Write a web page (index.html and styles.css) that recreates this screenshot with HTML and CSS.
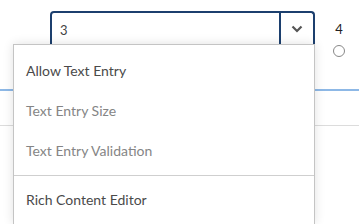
FILE: index.html
```html
<!DOCTYPE html>
<html>
<head>
<meta charset="utf-8">
<link rel="stylesheet" href="styles.css">
</head>
<body>
<div class="page">
  <div class="top-row">
    <div class="select">
      <div class="select-value">3</div>
      <div class="select-btn">
        <svg width="12" height="8" viewBox="0 0 12 8"><path d="M1.5 1.5 L6 6 L10.5 1.5" fill="none" stroke="#555" stroke-width="2.2"/></svg>
      </div>
    </div>
    <div class="choice">
      <div class="choice-label">4</div>
      <div class="radio"></div>
    </div>
  </div>
  <div class="rule-blue"></div>
  <div class="rule-gray"></div>
</div>
<div class="menu">
  <div class="menu-item">Allow Text Entry</div>
  <div class="menu-item disabled">Text Entry Size</div>
  <div class="menu-item disabled">Text Entry Validation</div>
  <div class="menu-sep"></div>
  <div class="menu-item">Rich Content Editor</div>
</div>
</body>
</html>
```
FILE: styles.css
```css
html, body {
  margin: 0;
  padding: 0;
  background: #fff;
  font-family: Lato, "Open Sans", sans-serif;
  overflow: hidden;
  width: 359px;
  height: 224px;
}
.page {
  padding-top: 11px;
}
.top-row {
  display: flex;
  align-items: flex-start;
}
.select {
  margin-left: 50px;
  width: 265px;
  height: 33px;
  box-sizing: border-box;
  border: 2px solid #1c3f6e;
  border-bottom: none;
  border-radius: 4px 4px 0 0;
  display: flex;
}
.select-value {
  flex: 1;
  padding-left: 8px;
  padding-top: 9px;
  font-size: 13px;
  color: #444;
}
.select-btn {
  width: 34px;
  border-left: 2px solid #1c3f6e;
  display: flex;
  justify-content: center;
  padding-top: 12px;
  box-sizing: border-box;
}
.choice {
  margin-left: 16px;
  width: 16px;
  display: flex;
  flex-direction: column;
  align-items: center;
  padding-top: 10px;
}
.choice-label {
  font-size: 13px;
  color: #222;
  line-height: 16px;
}
.radio {
  margin-top: 8px;
  width: 12px;
  height: 12px;
  border: 1px solid #888;
  border-radius: 50%;
  box-sizing: border-box;
}
.rule-blue {
  margin-top: 32px;
  height: 2px;
  background: #8db8e6;
}
.rule-gray {
  margin-top: 34px;
  height: 1px;
  background: #dcdcdc;
}
.menu {
  position: absolute;
  left: 13px;
  top: 44px;
  bottom: 0;
  width: 302px;
  box-sizing: border-box;
  background: #fff;
  border: 1px solid #c4c4c4;
  border-bottom: none;
  box-shadow: 0 0 10px rgba(0,0,0,0.12);
  padding-top: 6px;
  overflow: hidden;
}
.menu-item {
  height: 40px;
  line-height: 40px;
  padding-left: 12px;
  font-size: 14px;
  color: #4a4a4a;
}
.menu-item.disabled {
  color: #858585;
}
.menu-sep {
  margin: 4px 0;
  height: 1px;
  background: #cfcfcf;
}
```
